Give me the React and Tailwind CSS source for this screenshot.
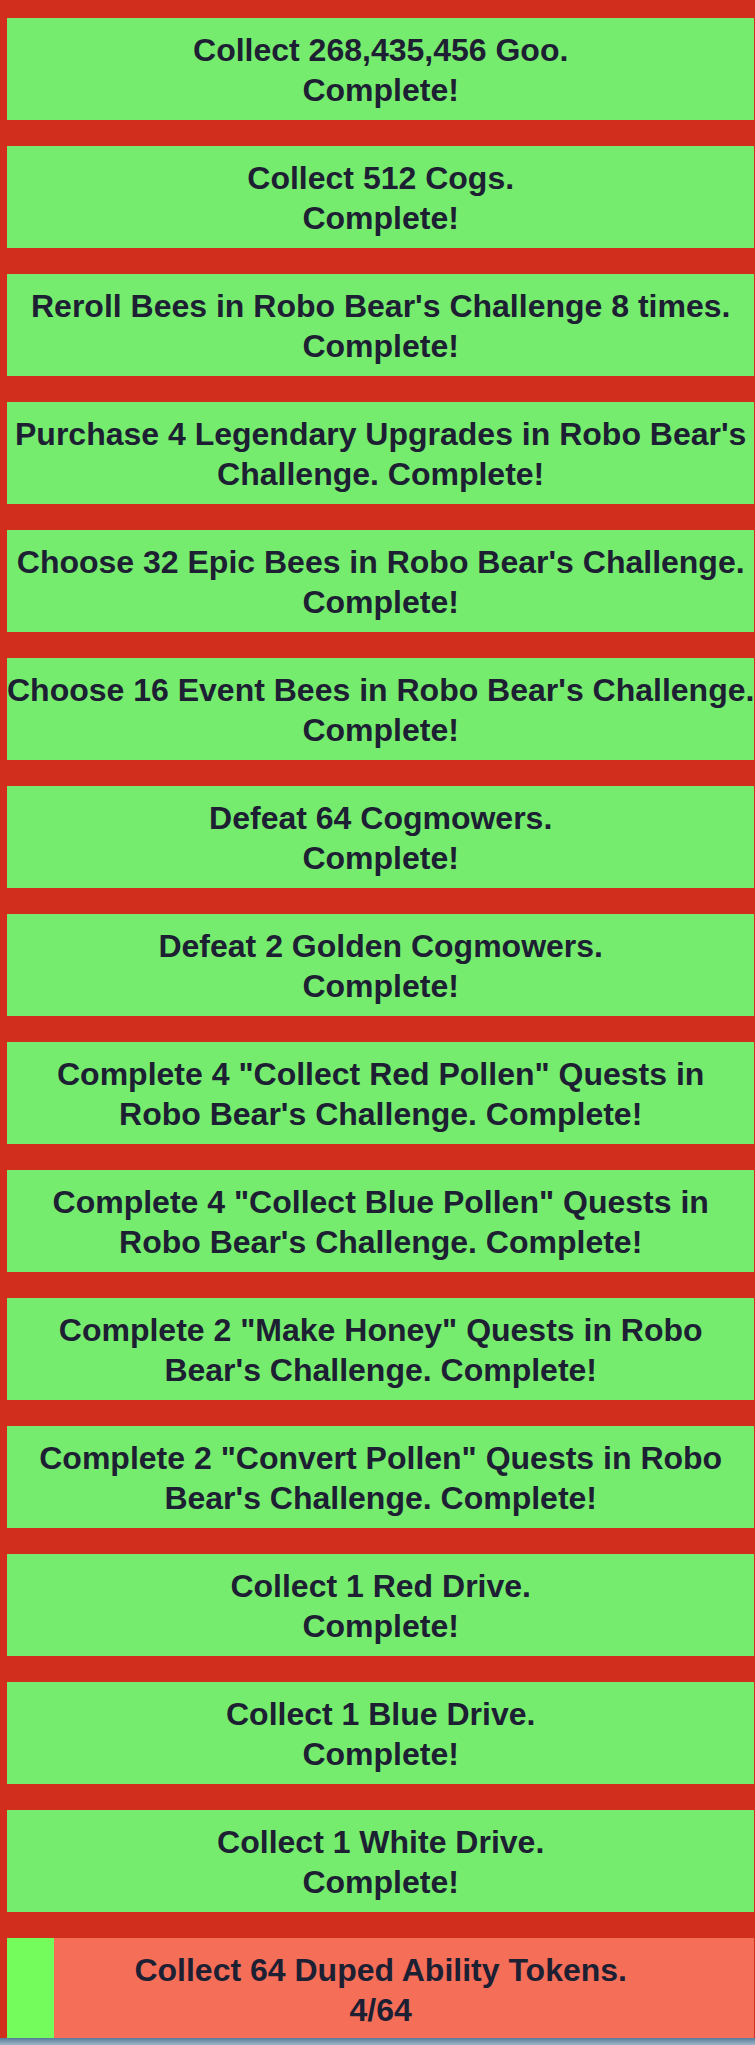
import React from "react";

const quests = [
  { lines: ["Collect 268,435,456 Goo.", "Complete!"] },
  { lines: ["Collect 512 Cogs.", "Complete!"] },
  { lines: ["Reroll Bees in Robo Bear's Challenge 8 times.", "Complete!"] },
  { lines: ["Purchase 4 Legendary Upgrades in Robo Bear's", "Challenge. Complete!"] },
  { lines: ["Choose 32 Epic Bees in Robo Bear's Challenge.", "Complete!"] },
  { lines: ["Choose 16 Event Bees in Robo Bear's Challenge.", "Complete!"] },
  { lines: ["Defeat 64 Cogmowers.", "Complete!"] },
  { lines: ["Defeat 2 Golden Cogmowers.", "Complete!"] },
  { lines: ['Complete 4 "Collect Red Pollen" Quests in', "Robo Bear's Challenge. Complete!"] },
  { lines: ['Complete 4 "Collect Blue Pollen" Quests in', "Robo Bear's Challenge. Complete!"] },
  { lines: ['Complete 2 "Make Honey" Quests in Robo', "Bear's Challenge. Complete!"] },
  { lines: ['Complete 2 "Convert Pollen" Quests in Robo', "Bear's Challenge. Complete!"] },
  { lines: ["Collect 1 Red Drive.", "Complete!"] },
  { lines: ["Collect 1 Blue Drive.", "Complete!"] },
  { lines: ["Collect 1 White Drive.", "Complete!"] },
  { lines: ["Collect 64 Duped Ability Tokens.", "4/64"], progress: 4 / 64 },
];

function QuestRow({ quest }) {
  const done = quest.progress === undefined;
  return (
    <div
      className={`relative h-[102px] shrink-0 flex flex-col items-center justify-center pt-[2px] ${
        done ? "bg-[#76ec6e]" : "bg-[#f46e58]"
      }`}
    >
      {!done && (
        <div
          className="absolute left-0 top-0 bottom-0 bg-[#74fc5c]"
          style={{ width: `${quest.progress * 100}%` }}
        />
      )}
      {quest.lines.map((line, i) => (
        <div
          key={i}
          className="relative whitespace-nowrap text-[32px] leading-[40px] font-bold text-[#1c2032] text-center"
        >
          {line}
        </div>
      ))}
    </div>
  );
}

export default function App() {
  return (
    <div
      className="w-[755px] h-[2045px] flex overflow-hidden"
      style={{ fontFamily: '"Liberation Sans", Arial, sans-serif' }}
    >
      <div className="flex-1 flex flex-col">
        <div className="flex-1 bg-[#d22e1e] overflow-hidden pt-[18px] pl-[7px] pr-[5px] flex flex-col gap-[26px]">
          {quests.map((q, i) => (
            <QuestRow key={i} quest={q} />
          ))}
        </div>
        <div className="h-[7px] bg-gradient-to-b from-[#557a98] to-[#9fb6c8]" />
      </div>
      <div className="w-[6px] bg-[#4f7594]" />
    </div>
  );
}
